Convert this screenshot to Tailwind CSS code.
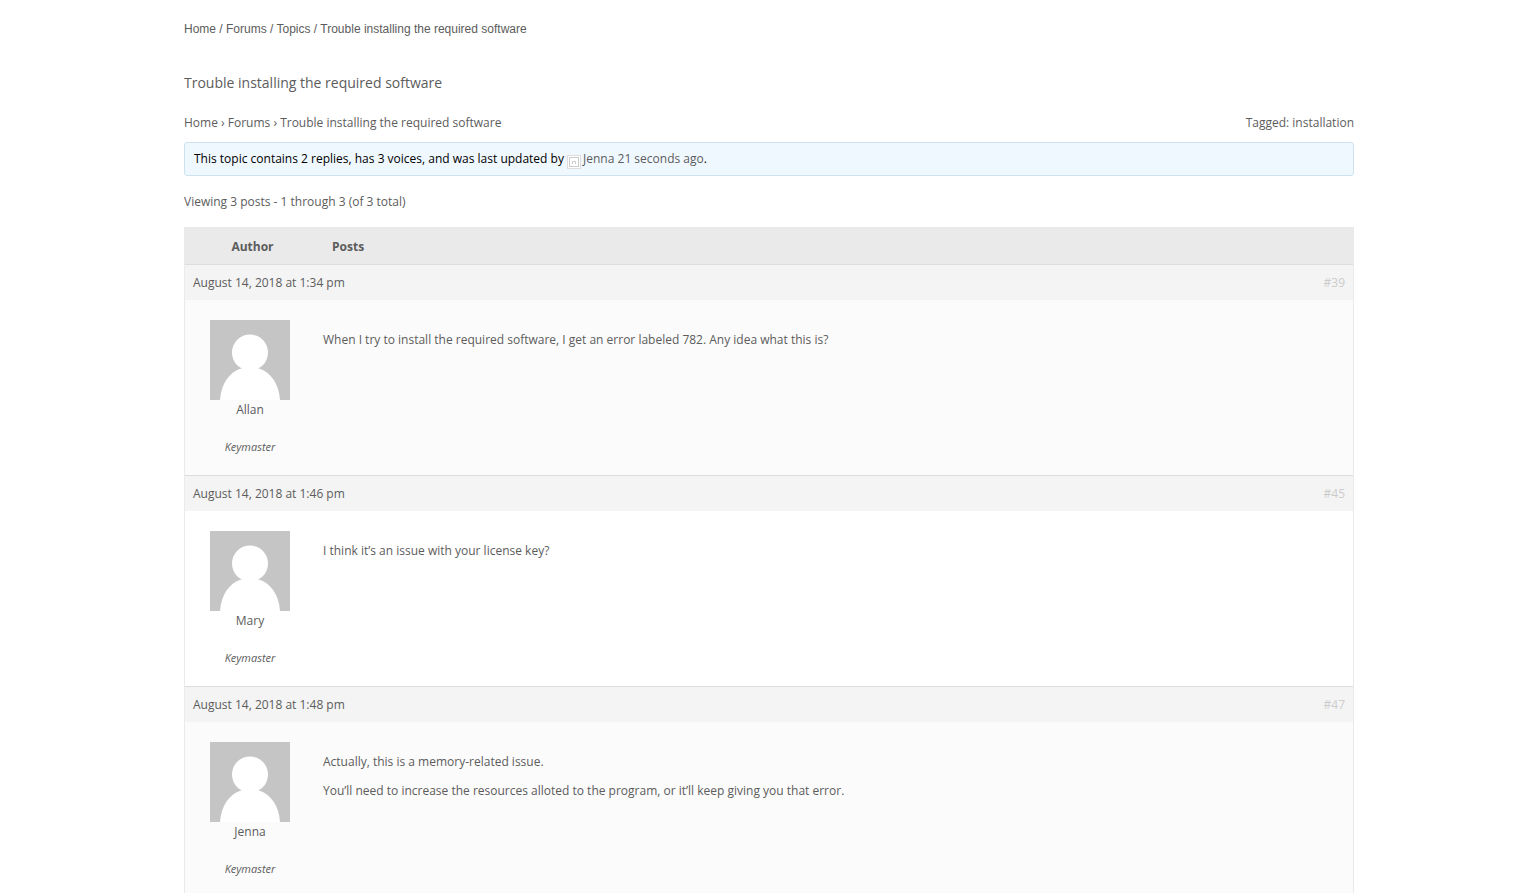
<!DOCTYPE html>
<html lang="en">
<head>
    <meta charset="UTF-8">
    <meta name="viewport" content="width=device-width, initial-scale=1.0">
    <title>Trouble installing the required software</title>
    <script src="https://cdn.jsdelivr.net/npm/@tailwindcss/browser@4"></script>
</head>
<body class="bg-white pr-0.5 font-['Open_Sans',sans-serif] text-[12px] leading-5 text-[#5c5c5c]">
    <!-- avatar silhouette, shared by every post -->
    <svg class="hidden">
        <symbol id="avatar" viewBox="0 0 80 80">
            <rect width="80" height="80" fill="#c5c5c5"/>
            <circle cx="40" cy="32.5" r="18" fill="#fff"/>
            <path d="M10 80C11 64 19 52.500 31 48.500Q40 46 49 48.500C61 52.500 69 64 70 80Z" fill="#fff"/>
        </symbol>
    </svg>

    <div class="mx-auto w-full max-w-[1170px]">
        <nav class="pt-[19px] font-['Liberation_Sans',Arial,sans-serif]">
            <a href="#">Home</a> / <a href="#">Forums</a> / <a href="#">Topics</a> / <span>Trouble installing the required software</span>
        </nav>

        <h1 class="mt-[34px] text-[14px] leading-5">Trouble installing the required software</h1>

        <div class="mt-5 flex justify-between">
            <nav><a href="#">Home</a> › <a href="#">Forums</a> › <span>Trouble installing the required software</span></nav>
            <p>Tagged: <a href="#">installation</a></p>
        </div>

        <div class="mt-[9px] rounded-[3px] border border-[#cee1ef] bg-[#f0f8ff] px-[9px] py-1.5 text-black">
            <p>This topic contains 2 replies, has 3 voices, and was last updated by <svg class="mr-0.5 inline h-3.5 w-3.5 align-[-6px]" viewBox="0 0 14 14" fill="none"><rect x=".5" y=".5" width="13" height="13" fill="#fff" stroke="#ddd"/><rect x="2.500" y="2.500" width="9" height="9" stroke="#ccc"/><path d="M5.500 9V6.500H8.500V9" stroke="#ccc"/></svg><a href="#" class="text-[#5c5c5c]">Jenna</a> <a href="#" class="text-[#5c5c5c]">21 seconds ago</a>.</p>
        </div>

        <p class="mt-4">Viewing 3 posts - 1 through 3 (of 3 total)</p>

        <section class="mt-[15px] border border-[#eaeaea]">
            <header class="flex bg-[#eaeaea] pt-[9px] pb-[7px] font-bold">
                <div class="w-[135px] text-center">Author</div>
                <div class="pl-3">Posts</div>
            </header>

            <article class="border-t border-[#ddd] bg-[#fbfbfb]">
                <div class="flex h-[35px] items-center justify-between bg-[#f4f4f4] px-2">
                    <time>August 14, 2018 at 1:34 pm</time>
                    <a href="#" class="text-[#ccc]">#39</a>
                </div>
                <div class="flex">
                    <div class="w-[130px] pt-5 pb-[18px] text-center">
                        <svg class="mx-auto h-20 w-20" role="img" aria-label="Allan"><use href="#avatar"/></svg>
                        <a href="#" class="block">Allan</a>
                        <p class="mt-[17px] text-[11px] leading-5 italic">Keymaster</p>
                    </div>
                    <div class="flex-1 space-y-[9px] pt-[30px] pl-2">
                        <p>When I try to install the required software, I get an error labeled 782. Any idea what this is?</p>
                    </div>
                </div>
            </article>

            <article class="border-t border-[#ddd] bg-white">
                <div class="flex h-[35px] items-center justify-between bg-[#f4f4f4] px-2">
                    <time>August 14, 2018 at 1:46 pm</time>
                    <a href="#" class="text-[#ccc]">#45</a>
                </div>
                <div class="flex">
                    <div class="w-[130px] pt-5 pb-[18px] text-center">
                        <svg class="mx-auto h-20 w-20" role="img" aria-label="Mary"><use href="#avatar"/></svg>
                        <a href="#" class="block">Mary</a>
                        <p class="mt-[17px] text-[11px] leading-5 italic">Keymaster</p>
                    </div>
                    <div class="flex-1 space-y-[9px] pt-[30px] pl-2">
                        <p>I think it’s an issue with your license key?</p>
                    </div>
                </div>
            </article>

            <article class="border-t border-[#ddd] bg-[#fbfbfb]">
                <div class="flex h-[35px] items-center justify-between bg-[#f4f4f4] px-2">
                    <time>August 14, 2018 at 1:48 pm</time>
                    <a href="#" class="text-[#ccc]">#47</a>
                </div>
                <div class="flex">
                    <div class="w-[130px] pt-5 pb-[18px] text-center">
                        <svg class="mx-auto h-20 w-20" role="img" aria-label="Jenna"><use href="#avatar"/></svg>
                        <a href="#" class="block">Jenna</a>
                        <p class="mt-[17px] text-[11px] leading-5 italic">Keymaster</p>
                    </div>
                    <div class="flex-1 space-y-[9px] pt-[30px] pl-2">
                        <p>Actually, this is a memory-related issue.</p>
                        <p>You’ll need to increase the resources alloted to the program, or it’ll keep giving you that error.</p>
                    </div>
                </div>
            </article>
        </section>
    </div>
</body>
</html>
